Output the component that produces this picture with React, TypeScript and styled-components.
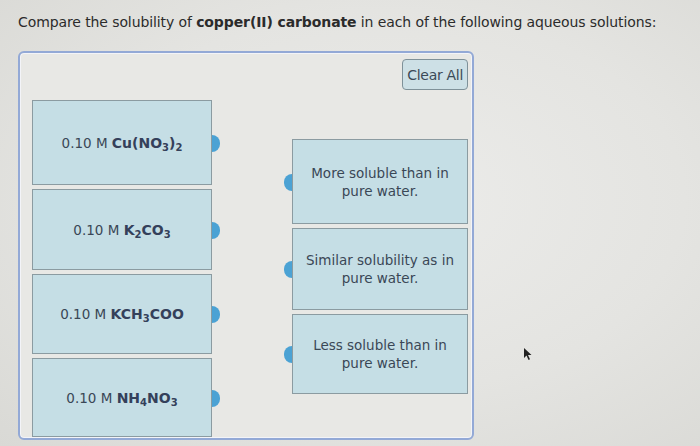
import React from "react";
import styled, { createGlobalStyle } from "styled-components";

const Global = createGlobalStyle`
  html, body {
    margin: 0;
    padding: 0;
  }
  body {
    width: 700px;
    height: 446px;
    overflow: hidden;
    background: radial-gradient(ellipse at 55% 45%, #ececea 0%, #e4e4e1 55%, #d9d9d5 100%);
    font-family: "DejaVu Sans", Verdana, sans-serif;
  }
`;

const Page = styled.div`
  position: relative;
  width: 700px;
  height: 446px;
  padding: 12px 0 0 18px;
  box-sizing: border-box;
`;

const Prompt = styled.p`
  margin: 0 0 19px 0;
  font-size: 14px;
  line-height: 20px;
  color: #2b2b2b;
  letter-spacing: -0.1px;
  white-space: nowrap;
`;

const Panel = styled.div`
  width: 456px;
  height: 389px;
  box-sizing: border-box;
  border: 2px solid #93a9d6;
  border-radius: 6px;
  box-shadow: inset 0 0 0 1px #f3f4f8;
  background: #e8e8e5;
  padding: 6px 4px 0 8px;
  display: flex;
  flex-direction: column;
`;

const Toolbar = styled.div`
  display: flex;
  justify-content: flex-end;
`;

const ClearButton = styled.button`
  height: 31px;
  padding: 0 4px;
  font-family: "DejaVu Sans", Verdana, sans-serif;
  font-size: 14px;
  color: #3b4a57;
  background: #cde0e6;
  border: 1px solid #7f9199;
  border-radius: 4px;
  letter-spacing: -0.3px;
`;

const Board = styled.div`
  display: flex;
  justify-content: space-between;
`;

const Column = styled.div<{ $top: number; $left: number }>`
  display: flex;
  flex-direction: column;
  gap: 4px;
  margin-top: ${(p) => p.$top}px;
  margin-left: ${(p) => p.$left}px;
`;

const Card = styled.div<{ $w: number; $h: number; $side: "left" | "right" }>`
  position: relative;
  width: ${(p) => p.$w}px;
  height: ${(p) => p.$h}px;
  box-sizing: border-box;
  background: #c5dee5;
  border: 1px solid #8b9ba1;
  display: flex;
  align-items: center;
  justify-content: center;
  text-align: center;
  font-size: 13.5px;
  line-height: 18px;
  color: #3a4756;

  &::after {
    content: "";
    position: absolute;
    top: 50%;
    margin-top: -8px;
    width: 8px;
    height: 17px;
    background: #4ba2d4;
    ${(p) =>
      p.$side === "right"
        ? "right: -9px; border-radius: 0 9px 9px 0;"
        : "left: -9px; border-radius: 9px 0 0 9px;"}
  }
`;

const Formula = styled.b`
  font-weight: bold;
  font-size: 14px;
  color: #34405a;

  sub {
    font-size: 10px;
    vertical-align: -3px;
    line-height: 0;
  }
`;

const Pointer = styled.svg`
  position: absolute;
  left: 523px;
  top: 347px;
`;

const sources = [
  { h: 85, f: <>Cu(NO<sub>3</sub>)<sub>2</sub></> },
  { h: 81, f: <>K<sub>2</sub>CO<sub>3</sub></> },
  { h: 80, f: <>KCH<sub>3</sub>COO</> },
  { h: 79, f: <>NH<sub>4</sub>NO<sub>3</sub></> },
];

const targets = [
  { h: 85, t: ["More soluble than in", "pure water."] },
  { h: 82, t: ["Similar solubility as in", "pure water."] },
  { h: 80, t: ["Less soluble than in", "pure water."] },
];

export default function App() {
  return (
    <Page>
      <Global />
      <Prompt>
        Compare the solubility of <b>copper(II) carbonate</b> in each of the following aqueous solutions:
      </Prompt>
      <Panel>
        <Toolbar>
          <ClearButton>Clear All</ClearButton>
        </Toolbar>
        <Board>
          <Column $top={10} $left={4}>
            {sources.map((s, i) => (
              <Card key={i} $w={180} $h={s.h} $side="right">
                <span>
                  0.10 M <Formula>{s.f}</Formula>
                </span>
              </Card>
            ))}
          </Column>
          <Column $top={49} $left={0}>
            {targets.map((t, i) => (
              <Card key={i} $w={176} $h={t.h} $side="left">
                <span>
                  {t.t[0]}
                  <br />
                  {t.t[1]}
                </span>
              </Card>
            ))}
          </Column>
        </Board>
      </Panel>
      <Pointer width="10" height="14" viewBox="0 0 10 14">
        <path d="M1 1 L1 11 L3.5 8.5 L5.5 13 L7 12.3 L5 8 L8.5 8 Z" fill="#222" />
      </Pointer>
    </Page>
  );
}
